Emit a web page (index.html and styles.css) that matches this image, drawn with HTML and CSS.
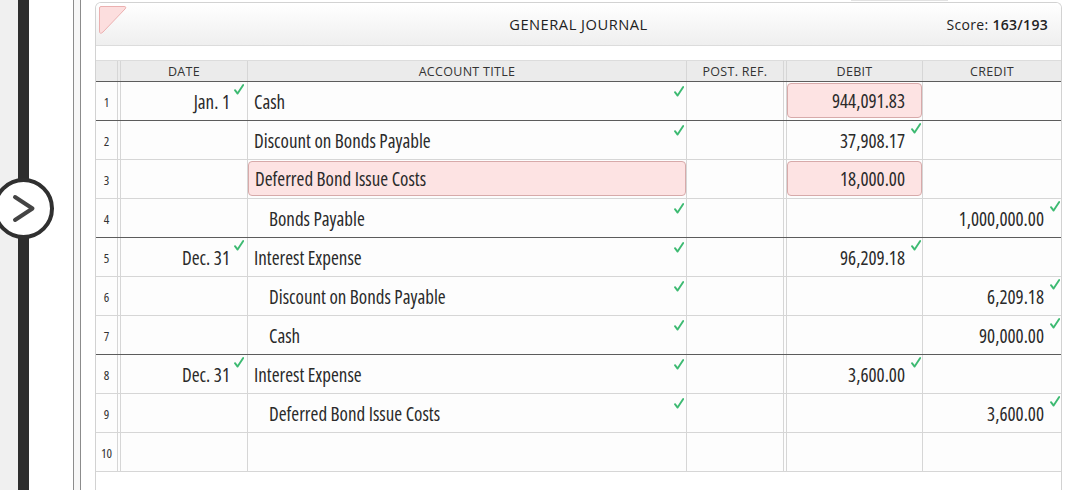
FILE: index.html
```
<!DOCTYPE html>
<html>
<head>
<meta charset="utf-8">
<link rel="stylesheet" href="styles.css">
</head>
<body>
<div class="page">
  <div class="rail">
    <div class="rail-gray"></div>
    <div class="rail-dark"></div>
    <div class="rail-white"></div>
    <div class="rail-line"></div>
    <div class="rail-gap"></div>
    <div class="rail-line"></div>
    <div class="rail-white2"></div>
    <svg class="toggle" width="62" height="64" viewBox="0 0 62 64">
      <circle cx="30.5" cy="31.5" r="28.5" fill="#fff" stroke="#303030" stroke-width="4"/>
      <polyline points="22,20 39.5,31.5 22,43" fill="none" stroke="#444" stroke-width="4" stroke-linecap="round" stroke-linejoin="round"/>
    </svg>
  </div>
  <div class="main">
    <div class="tabstrip"><div class="tab"></div></div>
    <div class="panel">
      <div class="panel-head">
        <svg class="flag" width="32" height="32" viewBox="0 0 32 32">
          <path d="M5 3.5 H28 Q31 3.5 29 6 L7 29 Q3.5 32 3.5 28 V5 Q3.5 3.5 5 3.5 Z" fill="#fcdede" stroke="#ebb0b0" stroke-width="1"/>
        </svg>
        <div class="title">GENERAL JOURNAL</div>
        <div class="score">Score: <b>163/193</b></div>
      </div>
      <div class="spacer"></div>
      <div class="row head">
        <div class="c"></div><div class="c sep"></div>
        <div class="c">DATE</div>
        <div class="c">ACCOUNT TITLE</div>
        <div class="c">POST. REF.</div>
        <div class="c sep"></div>
        <div class="c">DEBIT</div>
        <div class="c last">CREDIT</div>
      </div>

      <div class="row major">
        <div class="c num">1</div><div class="c sep"></div>
        <div class="c date">Jan. 1<i class="ck"></i></div>
        <div class="c acct">Cash<i class="ck"></i></div>
        <div class="c"></div><div class="c sep"></div>
        <div class="c amt boxcell"><span class="box amtbox">944,091.83</span></div>
        <div class="c amt last"></div>
      </div>

      <div class="row">
        <div class="c num">2</div><div class="c sep"></div>
        <div class="c date"></div>
        <div class="c acct">Discount on Bonds Payable<i class="ck"></i></div>
        <div class="c"></div><div class="c sep"></div>
        <div class="c amt">37,908.17<i class="ck"></i></div>
        <div class="c amt last"></div>
      </div>

      <div class="row">
        <div class="c num">3</div><div class="c sep"></div>
        <div class="c date"></div>
        <div class="c acct boxcell"><span class="box acctbox">Deferred Bond Issue Costs</span></div>
        <div class="c"></div><div class="c sep"></div>
        <div class="c amt boxcell"><span class="box amtbox">18,000.00</span></div>
        <div class="c amt last"></div>
      </div>

      <div class="row major">
        <div class="c num">4</div><div class="c sep"></div>
        <div class="c date"></div>
        <div class="c acct ind">Bonds Payable<i class="ck"></i></div>
        <div class="c"></div><div class="c sep"></div>
        <div class="c amt"></div>
        <div class="c amt last">1,000,000.00<i class="ck"></i></div>
      </div>

      <div class="row">
        <div class="c num">5</div><div class="c sep"></div>
        <div class="c date">Dec. 31<i class="ck"></i></div>
        <div class="c acct">Interest Expense<i class="ck"></i></div>
        <div class="c"></div><div class="c sep"></div>
        <div class="c amt">96,209.18<i class="ck"></i></div>
        <div class="c amt last"></div>
      </div>

      <div class="row">
        <div class="c num">6</div><div class="c sep"></div>
        <div class="c date"></div>
        <div class="c acct ind">Discount on Bonds Payable<i class="ck"></i></div>
        <div class="c"></div><div class="c sep"></div>
        <div class="c amt"></div>
        <div class="c amt last">6,209.18<i class="ck"></i></div>
      </div>

      <div class="row major">
        <div class="c num">7</div><div class="c sep"></div>
        <div class="c date"></div>
        <div class="c acct ind">Cash<i class="ck"></i></div>
        <div class="c"></div><div class="c sep"></div>
        <div class="c amt"></div>
        <div class="c amt last">90,000.00<i class="ck"></i></div>
      </div>

      <div class="row">
        <div class="c num">8</div><div class="c sep"></div>
        <div class="c date">Dec. 31<i class="ck"></i></div>
        <div class="c acct">Interest Expense<i class="ck"></i></div>
        <div class="c"></div><div class="c sep"></div>
        <div class="c amt">3,600.00<i class="ck"></i></div>
        <div class="c amt last"></div>
      </div>

      <div class="row">
        <div class="c num">9</div><div class="c sep"></div>
        <div class="c date"></div>
        <div class="c acct ind">Deferred Bond Issue Costs<i class="ck"></i></div>
        <div class="c"></div><div class="c sep"></div>
        <div class="c amt"></div>
        <div class="c amt last">3,600.00<i class="ck"></i></div>
      </div>

      <div class="row">
        <div class="c num">10</div><div class="c sep"></div>
        <div class="c date"></div>
        <div class="c acct"></div>
        <div class="c"></div><div class="c sep"></div>
        <div class="c amt"></div>
        <div class="c amt last"></div>
      </div>
    </div>
  </div>
</div>
</body>
</html>
```
FILE: styles.css
```
html, body {
  margin: 0;
  padding: 0;
  background: #fff;
  overflow: hidden;
}
.page {
  display: flex;
  height: 490px;
  width: 1065px;
}
.rail {
  position: relative;
  display: flex;
  width: 95px;
  flex: none;
}
.rail-gray { width: 18px; background: #f0f0f0; }
.rail-dark { width: 11px; background: #2e2e2e; }
.rail-white { width: 44px; background: #fff; }
.rail-line { width: 1px; background: #8c8c8c; }
.rail-gap { width: 6px; background: #f7f7f7; }
.rail-white2 { width: 14px; background: #fff; }
.toggle {
  position: absolute;
  left: -7px;
  top: 177px;
}
.main {
  display: flex;
  flex-direction: column;
  width: 967px;
  flex: none;
}
.tabstrip {
  height: 2px;
  display: flex;
}
.tab {
  margin-left: 756px;
  width: 97px;
  height: 1px;
  border: 1px solid #e2e2e2;
  border-top: 0;
  box-sizing: border-box;
}
.panel {
  flex: 1;
  border: 1px solid #d2d2d2;
  border-bottom: 0;
  border-radius: 6px 6px 0 0;
  background: #fff;
  overflow: hidden;
}
.panel-head {
  position: relative;
  height: 43px;
  box-sizing: border-box;
  border-bottom: 1px solid #dcdcdc;
  background: linear-gradient(#ffffff, #efefef);
  display: flex;
  align-items: center;
  justify-content: center;
  font-family: "Open Sans", "Liberation Sans", sans-serif;
  color: #222;
}
.flag {
  position: absolute;
  left: 0;
  top: 0;
}
.title {
  font-size: 14.7px;
  letter-spacing: 0.5px;
}
.score {
  position: absolute;
  right: 13px;
  top: 12px;
  font-size: 14px;
  letter-spacing: 0.3px;
}
.score b { font-weight: 600; }
.spacer { height: 14px; }
.row {
  display: grid;
  grid-template-columns: 22px 3px 127px 439px 97px 3px 136px 138px;
  height: 39px;
  box-sizing: border-box;
  border-bottom: 1px solid #d6d6d6;
  font-family: "Open Sans", sans-serif;
  font-stretch: 75%;
  font-weight: 400;
  font-size: 19px;
  color: #2a2a2a;
  background: #fdfdfd;
}
.row.major { border-bottom-color: #5c5c5c; }
.row.head {
  height: 22px;
  border-top: 1px solid #dcdcdc;
  border-bottom-color: #5c5c5c;
  background: #ebebeb;
  font-family: "Open Sans", "Liberation Sans", sans-serif;
  font-stretch: 100%;
  font-weight: 400;
  font-size: 12.5px;
  letter-spacing: 0.3px;
  color: #333;
}
.row.head .c {
  justify-content: center;
  padding: 0;
}
.c {
  position: relative;
  box-sizing: border-box;
  border-right: 1px solid #d6d6d6;
  display: flex;
  align-items: center;
  white-space: nowrap;
  padding-top: 1px;
}
.c.last { border-right: 0; }
.c.sep { padding: 0; }
.num {
  justify-content: center;
  font-size: 13px;
  color: #333;
}
.date, .amt {
  justify-content: flex-end;
  padding-right: 17px;
}
.acct { padding-left: 6px; }
.acct.ind { padding-left: 21px; }
.boxcell {
  padding: 1px 0 2px 0;
  align-items: stretch;
}
.box {
  flex: 1;
  display: flex;
  align-items: center;
  padding-top: 1px;
  box-sizing: border-box;
  background: #fde3e3;
  border: 1px solid #d7aaaa;
  border-radius: 4px;
}
.acctbox { padding-left: 6px; }
.amtbox { justify-content: flex-end; padding-right: 16px; }
.ck {
  position: absolute;
  top: 3px;
  right: 2px;
  width: 10px;
  height: 11px;
  background: url("data:image/svg+xml;utf8,<svg xmlns='http://www.w3.org/2000/svg' width='10' height='11' viewBox='0 0 10 11'><path d='M1 6.2 L3.6 9.6 L9.2 1' fill='none' stroke='%233dba72' stroke-width='1.9' stroke-linecap='round' stroke-linejoin='round'/></svg>") no-repeat;
}
.date .ck { top: 2px; right: 3px; }
.amt .ck { top: 2px; right: 1px; }
.acct .ck { top: 4px; right: 2px; }
```
